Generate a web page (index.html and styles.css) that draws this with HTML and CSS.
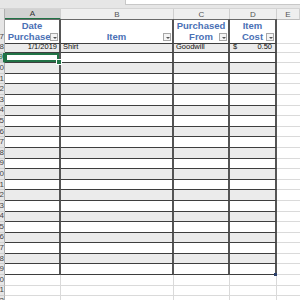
FILE: index.html
```html
<!DOCTYPE html>
<html>
<head>
<meta charset="utf-8">
<link rel="stylesheet" href="styles.css">
</head>
<body>
<div class="topbar"><div class="fx"></div></div>
<div class="sheet">
  <div class="r cols"><div class="rh corner"></div><div class="ch selcol">A</div><div class="ch">B</div><div class="ch">C</div><div class="ch">D</div><div class="ch">E</div></div>
  <div class="r hdr">
    <div class="rh"><span>7</span></div>
    <div class="th t"><span class="lbl">Date<br>Purchased</span><i class="dd"></i></div>
    <div class="th t"><span class="lbl">Item</span><i class="dd"></i></div>
    <div class="th t"><span class="lbl">Purchased<br>From</span><i class="dd"></i></div>
    <div class="th t"><span class="lbl">Item<br>Cost</span><i class="dd"></i></div>
    <div class="c e"></div>
  </div>
  <div class="r g"><div class="rh"><span>8</span></div><div class="c t txt num">1/1/2019</div><div class="c t txt">Shirt</div><div class="c t txt">Goodwill</div><div class="c t txt money"><span>$</span><span>0.50</span></div><div class="c e"></div></div>
  <div class="r"><div class="rh selrow"><span>9</span></div><div class="c t selcell"></div><div class="c t"></div><div class="c t"></div><div class="c t"></div><div class="c e"></div></div>
  <div class="r g"><div class="rh"><span>10</span></div><div class="c t"></div><div class="c t"></div><div class="c t"></div><div class="c t"></div><div class="c e"></div></div>
  <div class="r"><div class="rh"><span>11</span></div><div class="c t"></div><div class="c t"></div><div class="c t"></div><div class="c t"></div><div class="c e"></div></div>
  <div class="r g"><div class="rh"><span>12</span></div><div class="c t"></div><div class="c t"></div><div class="c t"></div><div class="c t"></div><div class="c e"></div></div>
  <div class="r"><div class="rh"><span>13</span></div><div class="c t"></div><div class="c t"></div><div class="c t"></div><div class="c t"></div><div class="c e"></div></div>
  <div class="r g"><div class="rh"><span>14</span></div><div class="c t"></div><div class="c t"></div><div class="c t"></div><div class="c t"></div><div class="c e"></div></div>
  <div class="r"><div class="rh"><span>15</span></div><div class="c t"></div><div class="c t"></div><div class="c t"></div><div class="c t"></div><div class="c e"></div></div>
  <div class="r g"><div class="rh"><span>16</span></div><div class="c t"></div><div class="c t"></div><div class="c t"></div><div class="c t"></div><div class="c e"></div></div>
  <div class="r"><div class="rh"><span>17</span></div><div class="c t"></div><div class="c t"></div><div class="c t"></div><div class="c t"></div><div class="c e"></div></div>
  <div class="r g"><div class="rh"><span>18</span></div><div class="c t"></div><div class="c t"></div><div class="c t"></div><div class="c t"></div><div class="c e"></div></div>
  <div class="r"><div class="rh"><span>19</span></div><div class="c t"></div><div class="c t"></div><div class="c t"></div><div class="c t"></div><div class="c e"></div></div>
  <div class="r g"><div class="rh"><span>20</span></div><div class="c t"></div><div class="c t"></div><div class="c t"></div><div class="c t"></div><div class="c e"></div></div>
  <div class="r"><div class="rh"><span>21</span></div><div class="c t"></div><div class="c t"></div><div class="c t"></div><div class="c t"></div><div class="c e"></div></div>
  <div class="r g"><div class="rh"><span>22</span></div><div class="c t"></div><div class="c t"></div><div class="c t"></div><div class="c t"></div><div class="c e"></div></div>
  <div class="r"><div class="rh"><span>23</span></div><div class="c t"></div><div class="c t"></div><div class="c t"></div><div class="c t"></div><div class="c e"></div></div>
  <div class="r g"><div class="rh"><span>24</span></div><div class="c t"></div><div class="c t"></div><div class="c t"></div><div class="c t"></div><div class="c e"></div></div>
  <div class="r"><div class="rh"><span>25</span></div><div class="c t"></div><div class="c t"></div><div class="c t"></div><div class="c t"></div><div class="c e"></div></div>
  <div class="r g"><div class="rh"><span>26</span></div><div class="c t"></div><div class="c t"></div><div class="c t"></div><div class="c t"></div><div class="c e"></div></div>
  <div class="r"><div class="rh"><span>27</span></div><div class="c t"></div><div class="c t"></div><div class="c t"></div><div class="c t"></div><div class="c e"></div></div>
  <div class="r g"><div class="rh"><span>28</span></div><div class="c t"></div><div class="c t"></div><div class="c t"></div><div class="c t"></div><div class="c e"></div></div>
  <div class="r"><div class="rh"><span>29</span></div><div class="c t"></div><div class="c t"></div><div class="c t"></div><div class="c t last"></div><div class="c e"></div></div>
  <div class="r"><div class="rh"><span>30</span></div><div class="c"></div><div class="c"></div><div class="c"></div><div class="c"></div><div class="c e"></div></div>
  <div class="r"><div class="rh"><span>31</span></div><div class="c"></div><div class="c"></div><div class="c"></div><div class="c"></div><div class="c e"></div></div>
  <div class="r"><div class="rh"><span>32</span></div><div class="c"></div><div class="c"></div><div class="c"></div><div class="c"></div><div class="c e"></div></div>
</div>
</body>
</html>
```
FILE: styles.css
```css
* { box-sizing: border-box; }
html, body { margin: 0; padding: 0; }
body {
  width: 300px;
  height: 300px;
  overflow: hidden;
  background: #fff;
  font-family: "Liberation Sans", Arial, sans-serif;
}
.topbar {
  height: 9px;
  background: #e6e6e6;
  border-bottom: 1px solid #d4d4d4;
}
.fx {
  margin-left: 125px;
  height: 5px;
  background: #fff;
  border-bottom: 1px solid #c8c8c8;
  border-left: 1px solid #c8c8c8;
}
.sheet { display: flex; flex-direction: column; }
.r {
  display: grid;
  grid-template-columns: 5px 56px 113px 56px 47px 1fr;
  height: 10.6px;
}
.cols { height: 10px; background: #efefef; }
.hdr { height: 23px; }
.rh {
  background: #e6e6e6;
  border-right: 1px solid #b0b0b0;
  border-bottom: 1px solid #d0d0d0;
  display: flex;
  justify-content: flex-end;
  align-items: center;
  overflow: hidden;
  font-size: 8px;
  color: #444;
  line-height: 1;
}
.hdr .rh { align-items: flex-end; padding-bottom: 2px; }
.rh span { flex: none; }
.selrow { background: #d2d2d2; color: #217346; border-right: 2px solid #217346; }
.ch {
  display: flex;
  align-items: center;
  justify-content: center;
  font-size: 8px;
  color: #555;
  border-right: 1px solid #cfcfcf;
  border-bottom: 1px solid #bdbdbd;
}
.corner { border-bottom: 1px solid #bdbdbd; }
.selcol { background: #d2d2d2; color: #333; border-bottom: 2px solid #217346; }
.c {
  border-right: 1px solid #dadada;
  border-bottom: 1px solid #dadada;
  font-size: 7.5px;
  color: #111;
  line-height: 8px;
  display: flex;
  align-items: center;
  padding: 0 2px;
  white-space: nowrap;
  overflow: hidden;
}
.txt { overflow: visible; }
.t {
  border-right: 2px solid #555;
  border-bottom: 1px solid #3e3e3e;
}
.g .t { background: #ebebeb; }
.num { justify-content: flex-end; }
.money { justify-content: space-between; padding: 0 3px; }
.th {
  position: relative;
  display: flex;
  align-items: flex-end;
  justify-content: center;
  padding-bottom: 1px;
  background: #fff;
  border-top: 1px solid #6a6a6a;
}
.lbl {
  flex: none;
  text-align: center;
  white-space: nowrap;
  font-size: 9.5px;
  line-height: 11px;
  font-weight: bold;
  color: #4a70b5;
}
.dd {
  position: absolute;
  right: 1px;
  bottom: 2px;
  width: 8px;
  height: 8px;
  background: #f4f4f4;
  border: 1px solid #a8a8a8;
}
.dd::after {
  content: "";
  position: absolute;
  left: 1.5px;
  top: 2.5px;
  border-left: 2px solid transparent;
  border-right: 2px solid transparent;
  border-top: 2px solid #555;
}
.hdr .th:first-of-type { border-left: 1px solid #217346; border-right-color: #3d6b4f; }
.selcell {
  position: relative;
  background: #fff;
  box-shadow: inset 0 0 0 2px #217346;
  overflow: visible;
}
.selcell::after {
  content: "";
  position: absolute;
  right: -3px;
  bottom: -3px;
  width: 4px;
  height: 4px;
  background: #217346;
  border: 1px solid #fff;
  z-index: 2;
}
.last { position: relative; overflow: visible; }
.last::after {
  content: "";
  position: absolute;
  right: -2px;
  bottom: -2px;
  width: 3px;
  height: 3px;
  background: #2b3f6b;
}
.e { border-right: none; }
```
